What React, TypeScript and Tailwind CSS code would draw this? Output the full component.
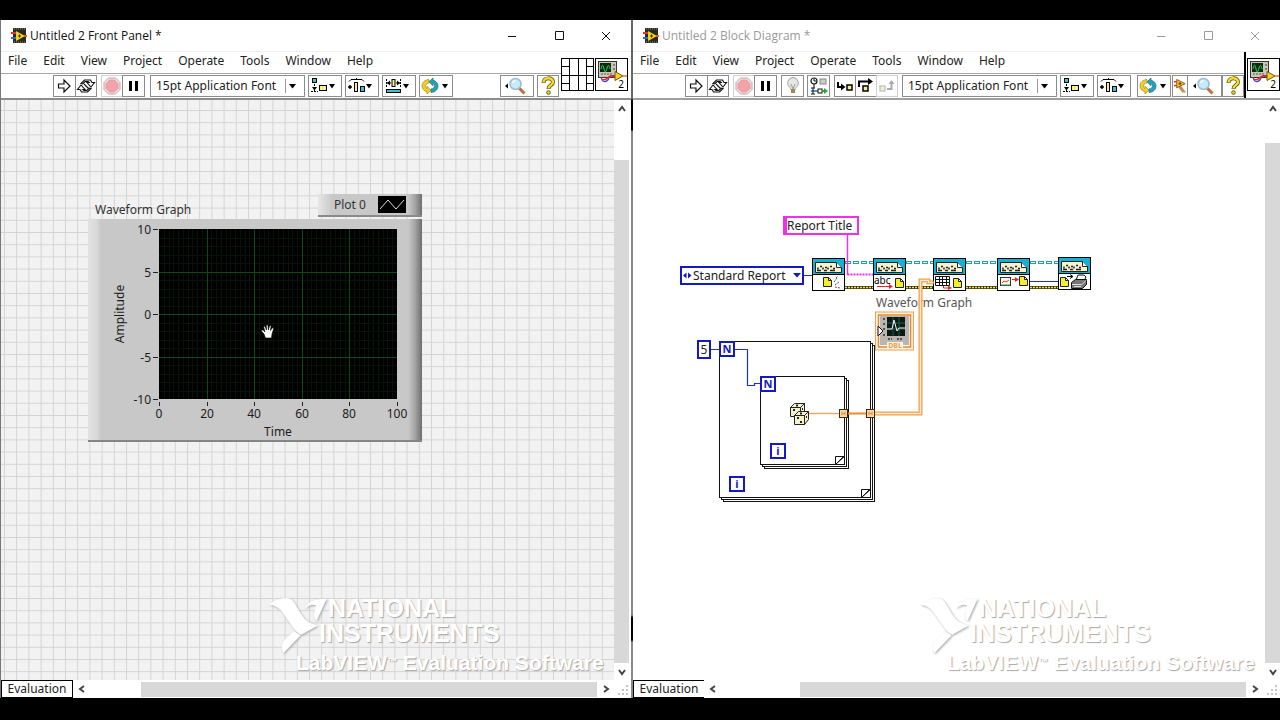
import React from "react";

const MENUS = ["File", "Edit", "View", "Project", "Operate", "Tools", "Window", "Help"];

/* ---------- small icons ---------- */

function AppIcon() {
  return (
    <svg width="16" height="16" viewBox="0 0 16 16">
      <rect x="2" y="0" width="13" height="15" fill="#2a2a20" />
      <path d="M3 1h11M3 14h11" stroke="#8a8a7a" strokeWidth="1" strokeDasharray="1 1" />
      <path d="M5 3l9 5-9 5z" fill="#f7d21c" />
      <path d="M7 8h3M8.500 6.500v3" stroke="#333" strokeWidth="1" />
      <path d="M0 5h5" stroke="#d33" strokeWidth="2" />
      <path d="M0 10h5" stroke="#36c" strokeWidth="2" />
      <path d="M13 8h3" stroke="#e85a2a" strokeWidth="2" />
    </svg>
  );
}

function RunIcon() {
  return (
    <svg width="20" height="20" viewBox="0 0 20 20" fill="#fff" stroke="#111" strokeWidth="1.2">
      <path d="M3.500 8h5.500v-4l6 6-6 6v-4h-5.500z" />
    </svg>
  );
}

function RunLoopIcon() {
  return (
    <svg width="20" height="20" viewBox="0 0 20 20" fill="#fff" stroke="#111" strokeWidth="1.1">
      <path d="M5 7.500l3.500-3.500h6l1.500 2.500h2.500l-3.500 4.500-4-4.500h2.200l-1-1h-3l-2.500 2.500z" />
      <path d="M15 12.500l-3.500 3.500h-6l-1.500-2.500h-2.500l3.500-4.500 4 4.500h-2.200l1 1h3l2.500-2.500z" />
      <path d="M8 8l4.500 4.500" />
    </svg>
  );
}

function StopIcon() {
  return (
    <svg width="20" height="20" viewBox="0 0 20 20">
      <path d="M6.500 2h7l4.500 4.500v7l-4.500 4.500h-7l-4.500-4.500v-7z" fill="#f6e6e6" stroke="#b9a3a3" />
      <path d="M7.500 4h5l3.500 3.500v5l-3.500 3.500h-5l-3.500-3.500v-5z" fill="#f0a3a8" stroke="#e9989e" />
    </svg>
  );
}

function PauseIcon() {
  return (
    <svg width="20" height="20" viewBox="0 0 20 20">
      <path d="M5 5h3v10h-3zM11 5h3v10h-3z" fill="#000" />
    </svg>
  );
}

function BulbIcon() {
  return (
    <svg width="20" height="20" viewBox="0 0 20 20">
      <path d="M10 1.500a5.500 5.500 0 0 0-3.300 9.800c.9.900 1.300 1.700 1.300 2.700h4c0-1 .4-1.800 1.300-2.700a5.500 5.500 0 0 0-3.300-9.800z" fill="#e6e6e6" stroke="#a5a5a5" />
      <path d="M8 8l2 5 2-5" fill="none" stroke="#999" />
      <rect x="8" y="13" width="4" height="4" fill="#a08a4a" />
    </svg>
  );
}

function RetainIcon() {
  return (
    <svg width="20" height="20" viewBox="0 0 20 20">
      <circle cx="5" cy="5" r="3" fill="#fff" stroke="#111" strokeWidth="1.200" />
      <path d="M5 3v2h2M5 8v4" stroke="#111" fill="none" />
      <rect x="11" y="3" width="6" height="5" fill="#ccc" stroke="#888" />
      <path d="M2 15h9" stroke="#1a6fd0" strokeWidth="1.500" />
      <path d="M4 12v6M2 12h4M2 18h4" stroke="#111" />
      <rect x="9" y="13" width="4" height="4" fill="#fff" stroke="#111" />
      <path d="M13 14h2v-2l4 3-4 3v-2h-2z" fill="#2aa83a" />
    </svg>
  );
}

function StepIntoIcon() {
  return (
    <svg width="20" height="20" viewBox="0 0 20 20">
      <path d="M3 6v5h4" stroke="#000" strokeWidth="2" fill="none" />
      <path d="M6 7.500l4.500 3.500-4.500 3.500z" />
      <rect x="12" y="9" width="5" height="5" fill="#f5ee8c" stroke="#000" strokeWidth="1.500" />
    </svg>
  );
}

function StepOverIcon() {
  return (
    <svg width="20" height="20" viewBox="0 0 20 20">
      <path d="M3 11v-5.500h10" stroke="#000" strokeWidth="2" fill="none" />
      <path d="M12 2l5 3.500-5 3.500z" />
      <rect x="7" y="10" width="5" height="5" fill="#f5ee8c" stroke="#000" strokeWidth="1.500" />
    </svg>
  );
}

function StepOutIcon() {
  return (
    <svg width="20" height="20" viewBox="0 0 20 20">
      <rect x="3" y="10" width="5" height="5" fill="#f7f3c4" stroke="#bbb" strokeWidth="1.200" />
      <path d="M10 13h4.500v-6" stroke="#aaa" strokeWidth="2" fill="none" />
      <path d="M11.500 8l3-4 3 4z" fill="#aaa" />
    </svg>
  );
}

function Arrow() {
  return <path d="M20 8h6l-3 4.500z" fill="#000" />;
}

function AlignIcon() {
  return (
    <svg width="32" height="20" viewBox="0 0 32 20">
      <rect x="3.500" y="2.500" width="4" height="4" fill="#35c3d8" stroke="#000" />
      <path d="M5.500 8v7M2 15.500h7" stroke="#000" strokeDasharray="2 1" />
      <path d="M3 11l2.500 3.500 2.500-3.500z" />
      <rect x="10.500" y="9.500" width="7" height="5" fill="#f5f08a" stroke="#000" />
      <Arrow />
    </svg>
  );
}

function DistributeIcon() {
  return (
    <svg width="32" height="20" viewBox="0 0 32 20">
      <path d="M3 5.500l2-2h11l2 2M10.500 3v-1" stroke="#000" fill="none" />
      <path d="M2 11h4M4 9v4" stroke="#000" strokeWidth="1.500" />
      <rect x="8.500" y="6.500" width="3" height="9" fill="#f5f08a" stroke="#000" />
      <rect x="14.500" y="10.500" width="4" height="5" fill="#35c3d8" stroke="#000" />
      <Arrow />
    </svg>
  );
}

function ResizeIcon() {
  return (
    <svg width="32" height="20" viewBox="0 0 32 20">
      <path d="M3.500 3v9M17.500 3v9" stroke="#000" strokeDasharray="2 1" />
      <path d="M4 7h4M13 7h4" stroke="#000" />
      <path d="M4 7l3-2.500v5zM17 7l-3-2.500v5z" />
      <rect x="9" y="3.500" width="3" height="7" fill="#f5f08a" stroke="#000" />
      <rect x="3.500" y="13.500" width="14" height="3" fill="#35c3d8" stroke="#000" />
      <Arrow />
    </svg>
  );
}

function ReorderIcon() {
  return (
    <svg width="32" height="20" viewBox="0 0 32 20">
      <path d="M9 3.500c-4 .2-7 2.800-7 6.500 0 2.800 2 5 5 5.700v2.300l4-3.800-4-4v2.300c-.9-.4-1.500-1.200-1.500-2.200 0-1.800 1.300-3 3.500-3.300z" fill="#f0cf2a" stroke="#a58a10" strokeWidth=".7" />
      <path d="M11 16.500c4-.2 7-2.800 7-6.500 0-2.800-2-5-5-5.700v-2.300l-4 3.800 4 4v-2.300c.9.400 1.500 1.200 1.500 2.200 0 1.800-1.300 3-3.500 3.300z" fill="#21a3b8" stroke="#14707f" strokeWidth=".7" />
      <g transform="translate(2 0)"><Arrow /></g>
    </svg>
  );
}

function SearchIcon() {
  return (
    <svg width="32" height="20" viewBox="0 0 32 20">
      <path d="M4 10l3-2.500v5z" />
      <path d="M18 12l5.500 5.500" stroke="#c8683c" strokeWidth="3" />
      <circle cx="14.500" cy="8" r="5.500" fill="#c4ecfb" stroke="#9dbccb" strokeWidth="1.500" />
      <path d="M11.500 7a3.500 3.500 0 0 1 3-2.500" stroke="#fff" strokeWidth="1.500" fill="none" />
    </svg>
  );
}

function HelpIcon() {
  return (
    <svg width="18" height="20" viewBox="0 0 18 20" fill="none">
      <path d="M4.500 7c0-6 9.500-6 9.500-1 0 3.500-4.500 3-4.500 7" stroke="#5f5410" strokeWidth="4" />
      <path d="M4.500 6.500c0-5.500 9.500-5.500 9.500-.5 0 3.500-4.500 3-4.500 6.500" stroke="#f3dc2c" strokeWidth="2.500" />
      <circle cx="9.500" cy="16.500" r="1.800" fill="#f3dc2c" stroke="#5f5410" />
    </svg>
  );
}

function CleanupIcon() {
  return (
    <svg width="15" height="20" viewBox="0 0 15 20">
      <path d="M8 9l6 8h-4l-4-5z" fill="#c98a5a" />
      <path d="M4 3l9 4.500-9 4.500z" fill="#f5c21c" stroke="#8a5a10" />
      <path d="M1 5.500h3M1 9.500h3" stroke="#d33" strokeWidth="1.500" />
      <path d="M6 7.500h3M7.500 6v3" stroke="#333" />
    </svg>
  );
}

function ConnectorPane() {
  return (
    <svg className="shrink-0" width="34" height="34" viewBox="0 0 34 34" fill="none" stroke="#000" shapeRendering="crispEdges">
      <rect x=".5" y=".5" width="32" height="32" fill="#fff" />
      <path d="M8.500 1v32M17.500 1v32M25.500 1v32M1 17.500h32M1 8.500h8M1 25.500h8M26 8.500h7M26 25.500h7" />
    </svg>
  );
}

function ViIcon() {
  return (
    <div className="relative h-[33px] w-[33px] shrink-0 border border-black bg-white">
      <svg width="31" height="31" viewBox="0 0 31 31">
        <rect x="2.500" y="2.500" width="18" height="16" fill="#cfc7b4" stroke="#333" />
        <rect x="4" y="4" width="11" height="9" fill="#062b12" />
        <path d="M5 10c1-5 2-5 3 0s2 3 3-1 2-3 3 1" stroke="#3fd35f" fill="none" />
        <circle cx="18" cy="6" r="1" fill="#666" />
        <circle cx="18" cy="10" r="1" fill="#666" />
        <path d="M5 15h12" stroke="#555" strokeDasharray="2 1" />
        <path d="M5 18c1 6 6 6 8 1 1-2 4-3 7-2" stroke="#2a4fd0" fill="none" strokeWidth="1.200" />
        <path d="M6 20c4 3 6-3 9-3s3 1 6 1" stroke="#e22" fill="none" strokeWidth="1.500" />
        <path d="M19 12.500l8 4.500-8 4.500z" fill="#f7d21c" stroke="#6a5a10" />
        <path d="M27 17h4" stroke="#e87a1a" strokeWidth="1.500" />
      </svg>
      <span className="absolute right-[3px] bottom-px text-[10px] leading-[10px]">2</span>
    </div>
  );
}

/* ---------- window parts ---------- */

function Tool({ label, children, className = "w-[23px]" }: { label: string; children: React.ReactNode; className?: string }) {
  return (
    <button
      type="button"
      aria-label={label}
      className={`flex h-[22px] shrink-0 items-center justify-center overflow-hidden border border-[#8c8c8c] bg-white ${className}`}
    >
      {children}
    </button>
  );
}

function FontSelect() {
  return (
    <label className="relative flex h-[22px] w-[155px] shrink-0 border border-[#8c8c8c] bg-white">
      <select aria-label="Font" className="w-full appearance-none bg-transparent pl-[5px] text-[12px] leading-[20px] text-[#222] outline-none">
        <option>15pt Application Font</option>
      </select>
      <svg className="pointer-events-none absolute top-0 right-0" width="20" height="20" viewBox="0 0 20 20">
        <path d="M1.500 3v14" stroke="#999" />
        <path d="M5 8h7l-3.500 4.500z" />
      </svg>
    </label>
  );
}

function TitleBar({ title, active }: { title: string; active: boolean }) {
  const tone = active ? "text-[#111]" : "text-[#9a9a9a]";
  const btn = "flex h-full w-[47px] items-center justify-center";
  return (
    <div className={`flex h-8 items-center border-b border-[#efefef] pr-[2px] pl-[10px] font-['Open_Sans','Noto_Sans',sans-serif] ${tone}`}>
      <AppIcon />
      <h1 className="flex-1 truncate pl-[3px] text-[12px] leading-[30px]">{title}</h1>
      <button type="button" aria-label="Minimize" className={btn}>
        <svg width="10" height="10" viewBox="0 0 10 10" stroke="currentColor"><path d="M1 5.500h8" /></svg>
      </button>
      <button type="button" aria-label="Maximize" className={btn}>
        <svg width="10" height="10" viewBox="0 0 10 10" fill="none" stroke="currentColor"><path d="M1.500 .5h8v8h-8z" /></svg>
      </button>
      <button type="button" aria-label="Close" className={btn}>
        <svg width="10" height="10" viewBox="0 0 10 10" stroke="currentColor"><path d="M1 1l8 8M9 1l-8 8" /></svg>
      </button>
    </div>
  );
}

function MenuBar() {
  return (
    <nav className="flex h-[21px] items-start gap-4 pl-[7px] text-[12px] leading-[18px] text-[#222]">
      {MENUS.map((m) => (
        <button key={m} type="button">{m}</button>
      ))}
    </nav>
  );
}

function Chevron({ d, label, className }: { d: string; label: string; className: string }) {
  return (
    <button type="button" aria-label={label} className={`flex shrink-0 items-center justify-center ${className}`}>
      <svg width="10" height="10" viewBox="0 0 10 10" fill="none" stroke="#444" strokeWidth="2"><path d={d} /></svg>
    </button>
  );
}

function VScroll({ thumb }: { thumb: string }) {
  return (
    <div className="flex w-[15px] shrink-0 flex-col bg-white">
      <Chevron label="Scroll up" d="M2 7l3-4 3 4" className="h-[18px]" />
      <div className={`flex-1 ${thumb}`}>
        <div className="h-full bg-[#d8d8d8]" />
      </div>
      <Chevron label="Scroll down" d="M2 3l3 4 3-4" className="h-[17px]" />
    </div>
  );
}

function StatusRow({ thumb, box }: { thumb: string; box: string }) {
  return (
    <div className="flex h-[18px] shrink-0 items-stretch bg-white">
      <div className={`flex shrink-0 items-start justify-center border border-black text-[12px] leading-[15px] text-[#222] ${box}`}>
        Evaluation
      </div>
      <Chevron label="Scroll left" d="M7 2l-4 3 4 3" className="w-[17px]" />
      <div className={`flex-1 pt-[2px] pb-px ${thumb}`}>
        <div className="h-full bg-[#d8d8d8]" />
      </div>
      <Chevron label="Scroll right" d="M3 2l4 3-4 3" className="w-[17px]" />
      <svg className="shrink-0 self-end" width="17" height="17" viewBox="0 0 17 17">
        <path d="M12 5h2M8 9h2M12 9h2M4 13h2M8 13h2M12 13h2" stroke="#c4c4c4" strokeWidth="2" />
      </svg>
    </div>
  );
}

function Watermark() {
  return (
    <div className="pointer-events-none absolute right-[6px] bottom-[4px] w-[340px] font-['Liberation_Sans',Arial,sans-serif] font-bold text-white [text-shadow:1px_1px_1px_#a8a8a8]">
      <svg className="absolute top-0 left-0 drop-shadow-[1px_1px_1px_#a8a8a8]" width="64" height="60" viewBox="0 0 192 180" fill="#fff">
        <path d="M4 26C20 12 40 4 66 8c16 8 26 40 44 60 10 12 24 16 40 20L100 116C84 112 76 94 62 76 44 50 34 28 4 26z" />
        <path d="M78 106L98 118 46 172C36 150 46 132 60 122z" />
        <path d="M110 38C120 16 140 8 176 8L146 74C134 66 140 44 144 28 132 24 122 28 110 38z" />
      </svg>
      <div className="pl-[60px] text-[25px] leading-[25px]">NATIONAL</div>
      <div className="pl-[51px] text-[25px] leading-[25px]">INSTRUMENTS</div>
      <div className="pt-[4px] pl-[28px] text-[21px] leading-[26px] whitespace-nowrap">
        LabVIEW<sup className="text-[10px]">™</sup> Evaluation Software
      </div>
    </div>
  );
}

/* ---------- front panel ---------- */

function CanvasGrid() {
  return (
    <svg className="absolute inset-0 h-full w-full">
      <defs>
        <pattern id="panel-grid" width="12.2" height="12.2" patternUnits="userSpaceOnUse" x="3" y="10">
          <path d="M.5 0v12.200M0 .5h12.200" stroke="#d4d4d4" fill="none" />
        </pattern>
      </defs>
      <rect width="100%" height="100%" fill="#f2f2f2" />
      <rect width="100%" height="100%" fill="url(#panel-grid)" />
    </svg>
  );
}

const X_TICKS = [0, 20, 40, 60, 80, 100];
const Y_TICKS = [10, 5, 0, -5, -10];

function WaveformGraph() {
  const left = 71;
  const top = 10;
  const w = 238;
  const h = 170;
  const xs = X_TICKS.map((v) => left + Math.round((v / 100) * w));
  const ys = Y_TICKS.map((v) => top + Math.round(((10 - v) / 20) * h));
  return (
    <div className="absolute top-[119px] left-[87px] h-[223px] w-[334px]">
      <div className="absolute inset-0 border-b-2 border-[#858585] bg-[linear-gradient(90deg,#e2e2e2_0px,#d8d8d8_9px,#c8c8c8_13px,#c8c8c8_320px,#a4a4a4_327px,#6e6e6e_334px)]" />
      <svg className="absolute inset-0" width="334" height="223" viewBox="0 0 334 223" fontSize="12" fill="#1c1c1c">
        <rect x={left} y={top} width={w} height={h} fill="#000" />
        <g stroke="#04140a">
          {Array.from({ length: 49 }, (_, i) => {
            const x = left + Math.round(((i + 1) * w) / 50) + 0.5;
            return <path key={i} d={`M${x} ${top}v${h}`} />;
          })}
          {Array.from({ length: 19 }, (_, i) => {
            const y = top + Math.round(((i + 1) * h) / 20) + 0.5;
            return <path key={i} d={`M${left} ${y}h${w}`} />;
          })}
        </g>
        <g stroke="#0b4a12">
          {xs.slice(1, -1).map((x) => <path key={x} d={`M${x + 0.5} ${top}v${h}`} />)}
          {ys.slice(1, -1).map((y) => <path key={y} d={`M${left} ${y + 0.5}h${w}`} />)}
        </g>
        {xs.map((x, i) => (
          <g key={x}>
            <path d={`M${x + 0.5} ${top + h + 3}v4`} stroke="#222" />
            <text x={x} y="199" textAnchor="middle">{X_TICKS[i]}</text>
          </g>
        ))}
        {ys.map((y, i) => (
          <g key={y}>
            <path d={`M65 ${y + 0.5}h5`} stroke="#222" />
            <text x="63" y={y + 5} textAnchor="end">{Y_TICKS[i]}</text>
          </g>
        ))}
        <text x="190" y="217" textAnchor="middle">Time</text>
        <text transform="translate(36 95) rotate(-90)" textAnchor="middle">Amplitude</text>
      </svg>
    </div>
  );
}

function HandCursor() {
  return (
    <svg className="absolute top-[224px] left-[260px]" width="14" height="15" viewBox="0 0 14 15" fill="#fff" stroke="#000" strokeWidth=".6">
      <path d="M4.500 14L3 10 .8 7.500c-.8-1 .4-2 1.400-1.200L4 8 2.800 3.500c-.3-1.300 1.200-1.600 1.600-.5L5.500 6 5.300 1.800c0-1.300 1.600-1.300 1.700 0L7.500 6l.9-3.800c.3-1.200 1.700-.9 1.600.3L9.500 6.500l1.500-2.200c.8-1 2-.3 1.500.9L11 10l-.5 4z" />
    </svg>
  );
}

function FrontPanel() {
  return (
    <main className="relative min-w-0 flex-1 overflow-hidden">
      <CanvasGrid />
      <div className="absolute top-[101px] left-[94px] text-[12px] leading-[17px] text-[#333]">Waveform Graph</div>
      <div className="absolute top-[94px] left-[317px] flex h-[23px] w-[104px] items-center border-b-2 border-[#8a8a8a] bg-[linear-gradient(90deg,#e6e6e6_0px,#d6d6d6_8px,#c8c8c8_14px,#c8c8c8_90px,#a4a4a4_97px,#6e6e6e_104px)] pl-4 text-[12px] text-[#333]">
        <span className="w-[44px] whitespace-nowrap">Plot 0</span>
        <svg width="28" height="17" viewBox="0 0 28 17">
          <rect width="28" height="17" fill="#000" />
          <path d="M2 13l8-9 8 9 8-9" stroke="#ddd" fill="none" />
        </svg>
      </div>
      <WaveformGraph />
      <HandCursor />
      <Watermark />
    </main>
  );
}

/* ---------- block diagram ---------- */

function Page({ x, y }: { x: number; y: number }) {
  return <path transform={`translate(${x} ${y})`} d="M.5.5h5l3 3v6h-8zM5.500.5v3h3" fill="#f5ee2c" stroke="#222" />;
}

function ReportNode({ x, y, children }: { x: number; y: number; children: React.ReactNode }) {
  return (
    <g transform={`translate(${x} ${y})`}>
      <rect x=".5" y=".5" width="32" height="32" fill="#fff" stroke="#000" />
      <rect x="1" y="1" width="31" height="15" fill="#12b2d6" />
      <path d="M3.500 14.500v-10h21l5 5v5z" fill="#f4f2cf" stroke="#222" />
      <path d="M24.500 4.500v5h5" fill="#fff" stroke="#222" />
      <path d="M6 11.500v-2M8 8.500h2M11 11.500v-2M13 9.500h2M16 11.500v-2M18 8.500h2M21 10.500h2M5 12.500h4M12 12.500h3M18 12.500h5" stroke="#222" strokeWidth="1.500" />
      <path d="M0 16.500h33" stroke="#000" />
      {children}
    </g>
  );
}

function Loop({ x, y, w, h }: { x: number; y: number; w: number; h: number }) {
  return (
    <g transform={`translate(${x} ${y})`} fill="#fff" stroke="#111">
      <rect x="4.500" y="4.500" width={w} height={h} />
      <rect x="2.500" y="2.500" width={w} height={h} />
      <rect x=".5" y=".5" width={w} height={h} />
      <path d={`M${w - 8.5} ${h + 0.5}v-8h9z`} />
      <path d={`M${w - 7.5} ${h - 0.5}l8-8`} />
    </g>
  );
}

function Terminal({ x, y, kind }: { x: number; y: number; kind: "N" | "i" }) {
  return (
    <g transform={`translate(${x} ${y})`}>
      <rect x="1" y="1" width="14" height="14" fill="#fff" stroke="#1418c8" strokeWidth="2" />
      <text x="8" y="12" textAnchor="middle" fontSize="11" fontWeight="700" fill="#1418c8">{kind}</text>
    </g>
  );
}

function Tunnel({ x, y }: { x: number; y: number }) {
  return (
    <g transform={`translate(${x} ${y})`}>
      <rect x=".5" y=".5" width="8" height="8" fill="#fbd9a4" stroke="#3a2c10" />
      <path d="M3 2.500v4M6 2.500v4M3 4.500h3" stroke="#e0903a" />
    </g>
  );
}

function Die({ x, y }: { x: number; y: number }) {
  return (
    <g transform={`translate(${x} ${y})`} fill="#f4f2cf" stroke="#222">
      <path d="M.5 4.500l4-4h10l-4 4zM10.500 4.500l4-4v8l-4 5zM.5 4.500h10v9h-10z" />
      <path d="M3 7h2M6 11h2M12 6h1M6 2.500h2" strokeWidth="2" />
    </g>
  );
}

function Diagram() {
  return (
    <svg className="absolute top-0 left-0" width="480" height="420" viewBox="0 0 480 420" fill="none">
      {/* report refnum and error wires */}
      <path d="M212 162.500h28M273 162.500h27M333 162.500h31M397 162.500h28" stroke="#2aa0a0" strokeWidth="3" strokeDasharray="6 2" />
      <path d="M213 162.500h27M274 162.500h26M334 162.500h30M398 162.500h27" stroke="#e8ffff" strokeDasharray="4 4" />
      <path d="M212 187.500h28M273 187.500h27M333 187.500h31M397 187.500h28" stroke="#3a3408" strokeWidth="3" />
      <path d="M212 187.500h28M273 187.500h27M333 187.500h31M397 187.500h28" stroke="#f0e03a" strokeWidth="1.500" strokeDasharray="2 1" />
      <path d="M170 175.500h9M397 181.500h28" stroke="#2030d0" />
      <path d="M214.500 134v41" stroke="#f030e8" strokeWidth="1.500" />
      <path d="M214.500 174.500h26" stroke="#f030e8" strokeWidth="2" strokeDasharray="2 1" />

      <ReportNode x={179} y={158}>
        <Page x={11} y={19} />
        <path d="M22 24l3-4M24 20l2-2M23 27l4-3M23 29l5 1" stroke="#555" strokeDasharray="2 1" />
      </ReportNode>
      <ReportNode x={240} y={158}>
        <text x="1" y="26" fontSize="10" fill="#000">abc</text>
        <path d="M4 28.500h14" stroke="#e22" />
        <path d="M16 26l4 2.500-4 2.500z" fill="#e22" />
        <Page x={22} y={20} />
      </ReportNode>
      <ReportNode x={300} y={158}>
        <path d="M2.500 18.500h14v9h-14zM6.500 18v9M9.500 18v9M13.500 18v9M2 21.500h14M2 24.500h14" stroke="#111" />
        <path d="M10.500 28v2h6" stroke="#e22" />
        <path d="M15 27.500l4 2.500-4 2z" fill="#e22" />
        <Page x={20} y={20} />
      </ReportNode>
      <ReportNode x={364} y={158}>
        <rect x="3.500" y="19.500" width="10" height="8" fill="#f7f7ea" stroke="#333" />
        <path d="M5 25l2-2 2 1 3-2" stroke="#d44" />
        <path d="M4 27h9" stroke="#3aa04a" />
        <path d="M15 21.500h5" stroke="#e22" />
        <path d="M18 19l4 2.500-4 2.500z" fill="#e22" />
        <Page x={22} y={18} />
      </ReportNode>
      <ReportNode x={425} y={157}>
        <Page x={2} y={20} />
        <path d="M9 19.500h5M12 17.500l3 2-3 2" stroke="#000" />
        <path d="M18 23l2-5h6l2 2-2 4z" fill="#fff" stroke="#111" />
        <path d="M13.500 25.500l4-3h11v5l-4 4h-11z" fill="#777" stroke="#111" />
        <path d="M14 27.500h10l4-4M16 29.500h7" stroke="#ddd" />
      </ReportNode>

      {/* nested for loops */}
      <Loop x={86} y={241} w={151} h={156} />
      <Loop x={127} y={276} w={84} h={88} />
      <path d="M77 249.500h10M102 249.500h12.500v36h7v-2h6" stroke="#2030d0" strokeWidth="1.200" />
      <Terminal x={86} y={241} kind="N" />
      <Terminal x={127} y={276} kind="N" />
      <Terminal x={137} y={343} kind="i" />
      <Terminal x={96} y={376} kind="i" />

      {/* dice and array wire */}
      <path d="M175 313.500h32" stroke="#f0a868" strokeWidth="1.500" />
      <path d="M215 313.500h19" stroke="#e88a30" strokeWidth="2" />
      <path d="M241 313.500h46.500v-133h8v2h5" stroke="#ee9f4c" strokeWidth="4" />
      <path d="M241 313.500h46.500v-133h8v2h5" stroke="#ffe9cc" strokeWidth="1.500" />
      <Tunnel x={206} y={309} />
      <Tunnel x={233} y={309} />
      <Die x={157} y={303} />
      <Die x={161} y={311} />

      {/* graph terminal */}
      <g transform="translate(242 211)">
        <rect x=".5" y="1" width="38" height="38" fill="#fff3e2" stroke="#f0a050" />
        <rect x="3.500" y="4" width="32" height="32" fill="#fff" stroke="#e08a30" strokeWidth="1.500" />
        <rect x="5" y="5" width="29" height="29" fill="#b9b5b0" />
        <rect x="12" y="6" width="18" height="19" fill="#0c1a16" />
        <path d="M12 12h18M12 18h18M18 6v19M24 6v19" stroke="#1d5a48" />
        <path d="M12 18h5l2-9 3 11 2-3h6" stroke="#f4f4f4" />
        <path d="M8 8h3M8 13h3M8 18h3M8 24h3M13 28h4M22 28h5" stroke="#333" strokeDasharray="2 1" strokeWidth="1.500" />
        <path d="M3 15l5 5-5 5z" fill="#fff" stroke="#111" />
        <rect x="12" y="31" width="16" height="7" fill="#fff3e2" />
        <text x="20" y="37" textAnchor="middle" fontSize="7" fontWeight="700" fill="#ee9f4c">DBL</text>
      </g>
    </svg>
  );
}

function BlockDiagram() {
  return (
    <main className="relative min-w-0 flex-1 overflow-hidden bg-white">
      <div className="absolute top-[194px] left-[243px] text-[12px] leading-[18px] text-[#555]">Waveform Graph</div>
      <Diagram />
      <input
        aria-label="Report title"
        defaultValue="Report Title"
        className="absolute top-[116px] left-[150px] h-[19px] w-[76px] border-2 border-l-4 border-[#f030e8] bg-white text-[12px] leading-[15px] text-[#222] outline-none"
      />
      <label className="absolute top-[166px] left-[47px] h-[19px] w-[124px] border-2 border-[#1418c8] bg-white">
        <select aria-label="Report type" className="block h-[15px] w-full appearance-none pl-[11px] text-[12px] leading-[15px] text-[#222] outline-none">
          <option>Standard Report</option>
        </select>
        <svg className="pointer-events-none absolute inset-0" width="120" height="15" viewBox="0 0 120 15" fill="#1418c8">
          <path d="M4.500 4.500v6l-3.500-3zM6 4.500v6l3.500-3zM111 5h8l-4 4.500z" />
        </svg>
      </label>
      <input
        aria-label="Loop count"
        defaultValue="5"
        className="absolute top-[240px] left-[64px] h-[19px] w-[14px] border-2 border-[#1418c8] bg-white text-center text-[12px] leading-[15px] text-[#222] outline-none"
      />
      <Watermark />
    </main>
  );
}

function FrontPanelWindow() {
  return (
    <section aria-label="Front Panel" className="flex min-w-0 flex-col border-l border-[#777] bg-white">
      <TitleBar title="Untitled 2 Front Panel *" active />
      <div className="flex h-12 border-b-2 border-[#8c8c8c]">
        <div className="flex min-w-0 flex-1 flex-col">
          <MenuBar />
          <div className="flex flex-1 items-center border-t border-[#a8a8a8] pr-[2px] pl-[52px]">
            <Tool label="Run"><RunIcon /></Tool>
            <Tool label="Run continuously" className="-ml-px w-[22px]"><RunLoopIcon /></Tool>
            <Tool label="Abort" className="ml-[4px] w-[22px] border-[#d0d0d0]"><StopIcon /></Tool>
            <Tool label="Pause" className="-ml-px w-[23px]"><PauseIcon /></Tool>
            <div className="ml-[5px] flex flex-1 items-center gap-[3px]">
              <FontSelect />
              <Tool label="Align objects" className="w-[34px]"><AlignIcon /></Tool>
              <Tool label="Distribute objects" className="w-[34px]"><DistributeIcon /></Tool>
              <Tool label="Resize objects" className="w-[34px]"><ResizeIcon /></Tool>
              <Tool label="Reorder" className="w-[34px]"><ReorderIcon /></Tool>
            </div>
            <Tool label="Search" className="w-[34px]"><SearchIcon /></Tool>
            <Tool label="Help" className="ml-[3px] w-[22px]"><HelpIcon /></Tool>
          </div>
        </div>
        <div className="flex items-start pt-[6px] pr-[3px]">
          <ConnectorPane />
          <ViIcon />
        </div>
      </div>
      <div className="flex min-h-0 flex-1 pr-[2px]">
        <FrontPanel />
        <VScroll thumb="pt-[42px]" />
      </div>
      <StatusRow box="w-[72px]" thumb="pl-[51px]" />
    </section>
  );
}

function BlockDiagramWindow() {
  return (
    <section aria-label="Block Diagram" className="flex min-w-0 flex-col bg-white">
      <TitleBar title="Untitled 2 Block Diagram *" active={false} />
      <div className="flex h-12 border-b-2 border-[#a0a0a0]">
        <div className="flex min-w-0 flex-1 flex-col">
          <MenuBar />
          <div className="flex flex-1 items-center border-t border-[#a8a8a8] pl-[52px]">
            <Tool label="Run"><RunIcon /></Tool>
            <Tool label="Run continuously" className="-ml-px w-[22px]"><RunLoopIcon /></Tool>
            <Tool label="Abort" className="ml-[4px] w-[22px] border-[#d0d0d0]"><StopIcon /></Tool>
            <Tool label="Pause" className="-ml-px w-[23px]"><PauseIcon /></Tool>
            <Tool label="Highlight execution" className="ml-[4px] w-[23px]"><BulbIcon /></Tool>
            <Tool label="Retain wire values" className="ml-[3px] w-[23px]"><RetainIcon /></Tool>
            <Tool label="Step into" className="ml-[4px] w-[22px]"><StepIntoIcon /></Tool>
            <Tool label="Step over" className="-ml-px w-[22px]"><StepOverIcon /></Tool>
            <Tool label="Step out" className="-ml-px w-[22px] border-[#d0d0d0]"><StepOutIcon /></Tool>
            <div className="ml-[4px] flex flex-1 items-center gap-[3px]">
              <FontSelect />
              <Tool label="Align objects" className="w-[34px]"><AlignIcon /></Tool>
              <Tool label="Distribute objects" className="w-[34px]"><DistributeIcon /></Tool>
              <Tool label="Reorder" className="ml-[3px] w-[34px]"><ReorderIcon /></Tool>
            </div>
            <Tool label="Clean up diagram" className="w-[16px]"><CleanupIcon /></Tool>
            <Tool label="Search" className="-ml-px w-[35px]"><SearchIcon /></Tool>
            <Tool label="Help" className="w-[22px]"><HelpIcon /></Tool>
          </div>
        </div>
        <div className="flex items-start border-l-2 border-black pt-[6px] pl-px">
          <ViIcon />
        </div>
      </div>
      <div className="flex min-h-0 flex-1">
        <BlockDiagram />
        <VScroll thumb="pt-[25px]" />
      </div>
      <StatusRow box="w-[71px] border-r-0" thumb="pl-[79px]" />
    </section>
  );
}

function App() {
  return (
    <div className="flex h-screen w-full flex-col bg-black pt-5 pb-[22px] font-['Noto_Sans','Open_Sans',sans-serif] text-black">
      <div className="grid min-h-0 flex-1 grid-cols-[631fr_2px_647fr]">
        <FrontPanelWindow />
        <div className="bg-[linear-gradient(#666_0px,#666_79px,#000_80px,#000_110px,#888_111px,#888_595px,#000_598px,#000_620px,#888_622px)]" />
        <BlockDiagramWindow />
      </div>
    </div>
  );
}

export default App;
